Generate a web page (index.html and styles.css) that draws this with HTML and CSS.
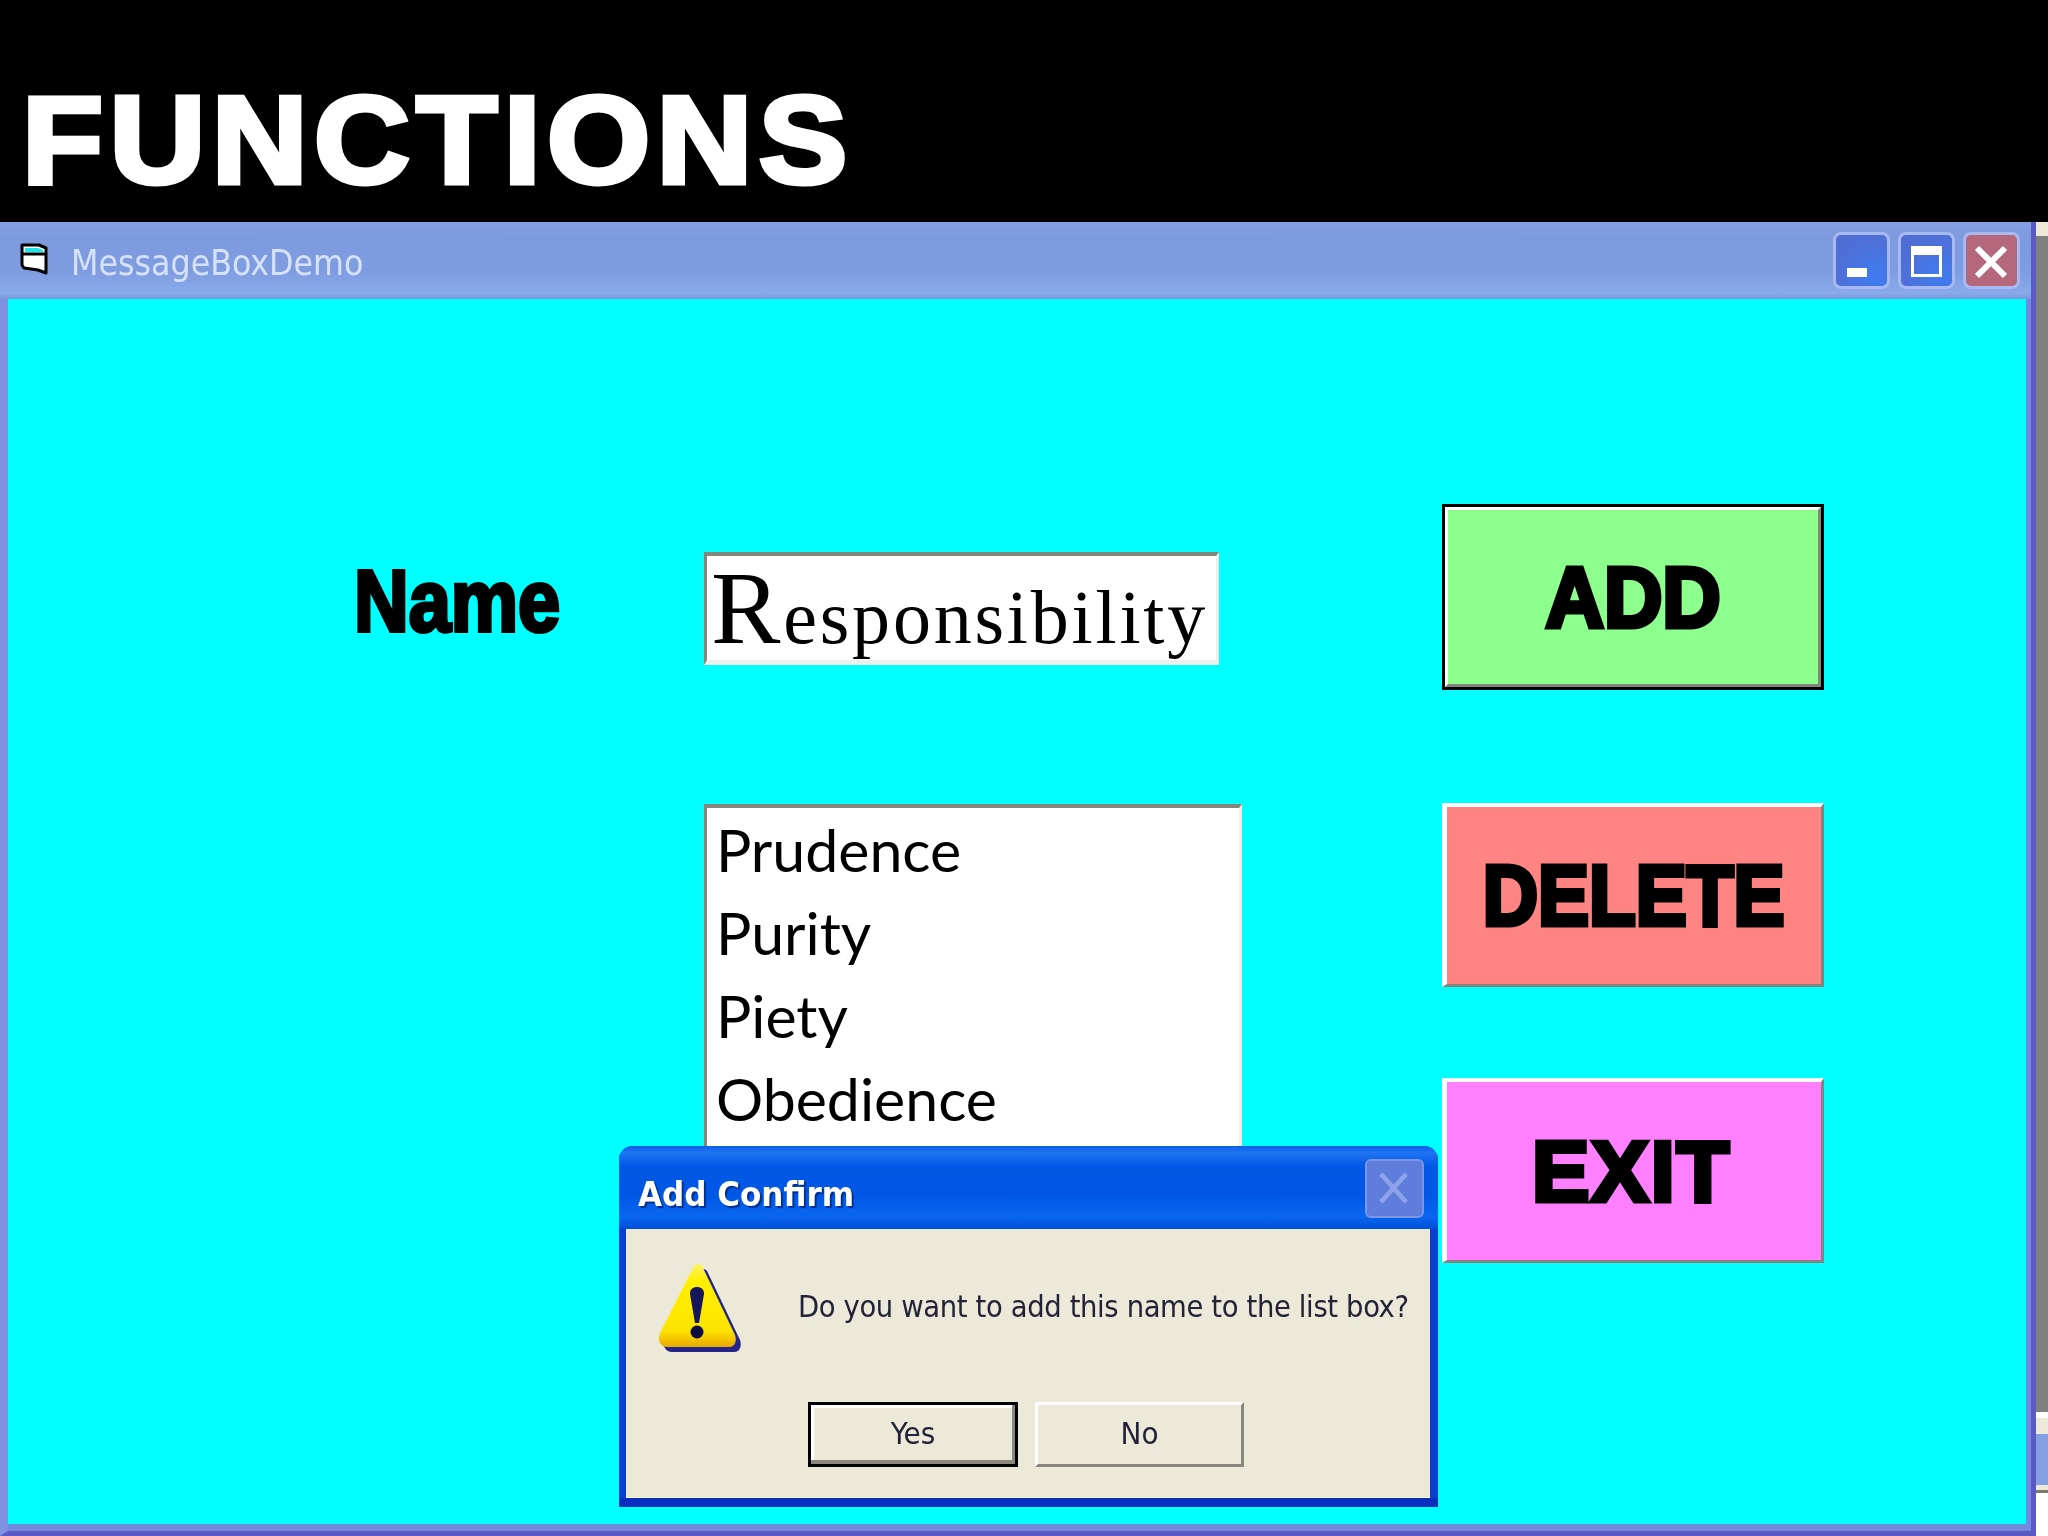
FILE: index.html
```html
<!DOCTYPE html>
<html lang="en">
<head>
<meta charset="utf-8">
<title>Functions</title>
<link rel="stylesheet" href="styles.css">
</head>
<body>
<div class="page">
  <header class="slide-head"><h1 class="slide-title">FUNCTIONS</h1></header>
  <div class="stage">
    <section class="window">
      <div class="titlebar">
        <svg class="app-icon" viewBox="0 0 28 32" aria-hidden="true">
          <path d="M26 20l3 3-3 2z" fill="#8c8c70"/>
          <path d="M2 2h17l7 3v25l-8-3-14-2-2-3z" fill="#fff"/>
          <path d="M5 5h13l5 2v2H5z" fill="#1fe6ea"/>
          <path d="M2 2h17l7 3v25l-8-3-14-2-2-3zM3 11h22" fill="none" stroke="#000" stroke-width="3" stroke-linejoin="round"/>
        </svg>
        <span class="window-title">MessageBoxDemo</span>
        <div class="caption-buttons">
          <span class="cap-btn"><svg viewBox="0 0 51 51" aria-hidden="true"><rect x="11" y="33" width="20" height="9" fill="#fff"/></svg></span>
          <span class="cap-btn"><svg viewBox="0 0 51 51" aria-hidden="true"><path d="M11.500 12.500h28v28h-28z" fill="none" stroke="#fff" stroke-width="3"/><rect x="10" y="11" width="31" height="9" fill="#fff"/></svg></span>
          <span class="cap-btn cap-close"><svg viewBox="0 0 51 51" aria-hidden="true"><path d="M11 13l28 28M39 13L11 41" stroke="#fff" stroke-width="6" fill="none"/></svg></span>
        </div>
      </div>
      <div class="client">
        <div class="name-col"><span class="name-label">Name</span></div>
        <div class="field-col">
          <div class="textbox"><span class="textbox-value">Responsibility</span></div>
          <ul class="listbox">
            <li>Prudence</li>
            <li>Purity</li>
            <li>Piety</li>
            <li>Obedience</li>
          </ul>
        </div>
        <div class="button-col">
          <div class="form-btn btn-add"><span>ADD</span></div>
          <div class="form-btn btn-delete"><span>DELETE</span></div>
          <div class="form-btn btn-exit"><span>EXIT</span></div>
        </div>
        <div class="dialog">
          <div class="dialog-title">
            <span class="dialog-title-text">Add Confirm</span>
            <span class="dialog-close"><svg viewBox="0 0 59 59" aria-hidden="true"><path d="M15 14l27 30M42 14L15 44" stroke="#8ea3ea" stroke-width="5" fill="none"/></svg></span>
          </div>
          <div class="dialog-body">
            <div class="dialog-msg">
              <svg class="warn-icon" viewBox="0 0 86 90" aria-hidden="true">
                <defs>
                  <linearGradient id="warnFill" x1="0" y1="0" x2="0" y2="1">
                    <stop offset="0" stop-color="#fff36a"/>
                    <stop offset=".2" stop-color="#ffef00"/>
                    <stop offset=".8" stop-color="#fde400"/>
                    <stop offset="1" stop-color="#eaa800"/>
                  </linearGradient>
                </defs>
                <path class="warn-shadow" d="M40 1c-3 0-4 2-5 4L2 70c-3 7 0 14 7 14h62c6 0 8-6 6-12L45 5c-1-3-3-4-5-4z"/>
                <path d="M40 1c-3 0-4 2-5 4L2 70c-3 7 0 14 7 14h62c6 0 8-6 6-12L45 5c-1-3-3-4-5-4z" fill="url(#warnFill)"/>
                <path d="M32 31c0-5 3-7 7-7s7 2 7 7l-5 29h-4z" fill="#16165a"/>
                <circle cx="39" cy="69" r="6.500" fill="#0d0d40"/>
              </svg>
              <p class="dialog-text">Do you want to add this name to the list box?</p>
            </div>
            <div class="dialog-actions">
              <span class="xp-btn xp-default">Yes</span>
              <span class="xp-btn">No</span>
            </div>
          </div>
        </div>
      </div>
    </section>
    <aside class="side-strip">
      <i class="s-beige-top"></i>
      <i class="s-grey"></i>
      <i class="s-white-line"></i>
      <i class="s-beige"></i>
      <i class="s-blue"></i>
      <i class="s-beige-line"></i>
      <i class="s-dark-line"></i>
      <i class="s-white"></i>
    </aside>
  </div>
</div>
</body>
</html>
```
FILE: styles.css
```css
* { box-sizing: border-box; }
html, body { margin: 0; padding: 0; background: #000; }
.page { width: 2048px; height: 1536px; display: flex; flex-direction: column; overflow: hidden; font-family: "Liberation Sans", Arial, sans-serif; }

.slide-head { height: 222px; background: #000; padding: 84px 0 0 22px; flex: none; }
.slide-title { display: inline-block; margin: 0; color: #fff; font-size: 124px; line-height: 112px; font-weight: 700; letter-spacing: 6px; -webkit-text-stroke: 5px #fff; transform: scaleX(1.07); transform-origin: left center; }

.stage { flex: 1; display: flex; min-height: 0; filter: blur(.6px); }
.window { width: 2036px; display: flex; flex-direction: column; background: #7a8ce0; border-left: 8px solid #7f92e2; border-right: 5px solid #5a5ac6; border-bottom: 5px solid #5a5ac6; box-shadow: inset -5px -7px 0 #7488dc; }

.titlebar { height: 77px; margin-left: -8px; padding: 0 12px 0 20px; display: flex; align-items: center; background: linear-gradient(#84a0e2 0, #7f9bdf 20%, #7f9ce0 65%, #88abea 92%, #7c96dc 100%); flex: none; }
.app-icon { width: 28px; height: 32px; flex: none; margin-top: -4px; }
.window-title { margin: 3px 0 0 23px; font-family: "DejaVu Sans", sans-serif; font-stretch: condensed; font-size: 35.3px; color: #d6e2fa; }
.caption-buttons { margin-left: auto; display: flex; gap: 8px; margin-top: -1px; margin-right: -1px; }
.cap-btn { width: 57px; height: 57px; border: 3px solid #a8b8f0; border-radius: 8px; background: radial-gradient(circle at 75% 80%, #3f7cf0 0, #4d70d8 60%, #4f6cd2 100%); display: block; }
.cap-btn svg { display: block; width: 100%; height: 100%; }
.cap-close { background: #b5677c; }

.client { position: relative; flex: 1; min-height: 0; background: #00ffff; display: flex; padding-left: 346px; margin-right: 5px; margin-bottom: 7px; }
.name-col { width: 350px; flex: none; padding-top: 252px; }
.name-label { display: inline-block; font-size: 88px; line-height: 100px; font-weight: 700; color: #000; -webkit-text-stroke: 4px #000; transform: scaleX(.86); transform-origin: left center; }
.field-col { width: 738px; flex: none; padding-top: 253px; }
.textbox { width: 515px; height: 113px; background: #fff; border-top: 4px solid #85857c; border-left: 3px solid #85857c; border-right: 3px solid #f0f0ea; border-bottom: 5px solid #f0f0ea; padding: 0 0 0 4px; }
.textbox-value { display: block; font-family: "Liberation Serif", serif; font-size: 76px; line-height: 104px; letter-spacing: 2.8px; color: #000; white-space: nowrap; }
.textbox-value::first-letter { font-size: 104px; line-height: 104px; }
.listbox { list-style: none; width: 538px; height: 480px; margin: 139px 0 0; padding: 0 0 0 9px; background: #fff; border-top: 4px solid #85857c; border-left: 3px solid #85857c; border-right: 3px solid #f0f0ea; font-family: Lato, sans-serif; font-size: 59px; color: #000; }
.listbox li { height: 83px; line-height: 83px; }

.button-col { width: 382px; flex: none; padding-top: 205px; display: flex; flex-direction: column; }
.form-btn { display: flex; align-items: center; justify-content: center; font-weight: 700; font-size: 86px; color: #000; -webkit-text-stroke: 5px #000; border-style: solid; border-width: 4px 3px 3px 5px; border-color: #fff #84847c #84847c #fff; }
.form-btn span { display: block; }
.btn-add { height: 186px; background: #8cff8c; outline: 3px solid #000; outline-offset: -3px; border-width: 6px; }
.btn-add span { transform: scaleX(.94); }
.btn-delete { height: 184px; margin-top: 113px; background: #ff8585; }
.btn-delete span { transform: scaleX(.89); }
.btn-exit { height: 185px; margin-top: 91px; padding-right: 5px; background: #ff80ff; letter-spacing: 2px; }

.dialog { position: absolute; left: 611px; top: 847px; width: 819px; height: 361px; display: flex; flex-direction: column; background: #0a3fd0; border-radius: 14px 14px 0 0; padding: 0 8px 9px 7px; box-shadow: inset 0 -9px 0 #0a2ebd; }
.dialog-title { height: 83px; margin: 0 -8px 0 -7px; padding: 0 14px 0 19px; border-radius: 14px 14px 0 0; display: flex; align-items: center; justify-content: space-between; background: linear-gradient(#0a5fe8 0, #1f74f2 8%, #0058e4 25%, #0057e6 60%, #0a66f0 85%, #0050d8 100%); flex: none; }
.dialog-title-text { color: #fff; font-family: "DejaVu Sans", sans-serif; font-stretch: condensed; font-size: 34.5px; font-weight: 700; margin-top: 12px; text-shadow: 2px 2px 1px #003090; }
.dialog-close { width: 59px; height: 59px; border-radius: 6px; background: #5f7edb; border: 2px solid #7d96e6; display: block; margin-top: 2px; }
.dialog-close svg { display: block; width: 100%; height: 100%; }
.dialog-body { flex: 1; background: #ece9d8; display: flex; flex-direction: column; border-bottom: 1px solid #f6f6f0; }
.dialog-msg { display: flex; padding: 34px 0 0 32px; height: 173px; }
.warn-icon { width: 86px; height: 90px; flex: none; overflow: visible; }
.warn-shadow { fill: #24248a; transform: translate(5px, 5px); }
.dialog-text { margin: 22px 0 0 54px; font-family: "DejaVu Sans", sans-serif; font-stretch: condensed; font-size: 30.5px; letter-spacing: -.36px; line-height: 44px; color: #222238; white-space: nowrap; }
.dialog-actions { display: flex; gap: 17px; padding-left: 182px; }
.xp-btn { width: 209px; height: 65px; display: flex; align-items: center; justify-content: center; padding-bottom: 4px; background: #ece9d8; border: 3px solid; border-color: #fff #8a887c #8a887c #fff; font-family: "DejaVu Sans", sans-serif; font-stretch: condensed; font-size: 31px; color: #222238; }
.xp-default { width: 210px; border: 3px solid #000; box-shadow: inset -3px -4px 0 #8a887c, inset 3px 3px 0 #fff; }

.side-strip { width: 12px; display: flex; flex-direction: column; background: #fff; }
.side-strip i { display: block; flex: none; }
.s-beige-top { height: 14px; background: #ece9d8; }
.s-grey { height: 1176px; background: #808080; }
.s-white-line { height: 6px; background: #fff; }
.s-beige { height: 16px; background: #ece9d8; }
.s-blue { height: 51px; background: #84a0e0; }
.s-beige-line { height: 5px; background: #ece9d8; }
.s-dark-line { height: 3px; background: #7a7a70; }
.s-white { height: 43px; background: #fff; }
```
